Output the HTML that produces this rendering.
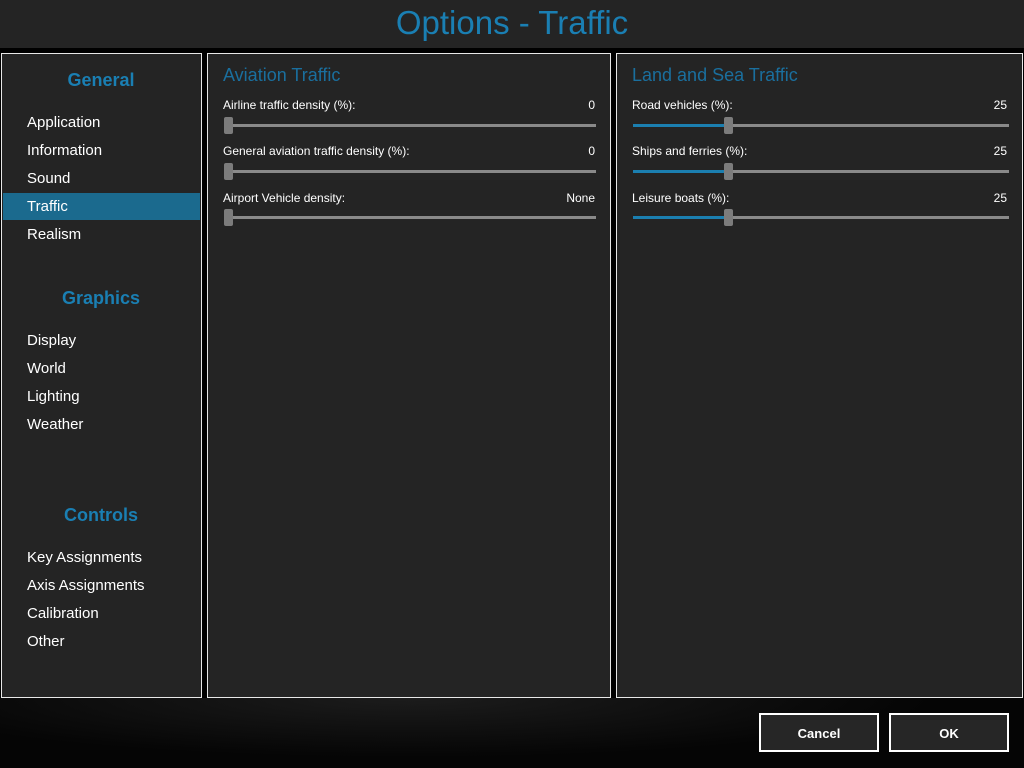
<!DOCTYPE html>
<html><head><style>
*{margin:0;padding:0;box-sizing:border-box}
body{width:1024px;height:768px;background:#000;font-family:"Liberation Sans",sans-serif;position:relative;overflow:hidden;color:#fff}
.hdr{position:absolute;left:0;top:0;width:1024px;height:48px;background:#242424;text-align:center;font-size:33px;color:#1a7fb3;line-height:46px}
.bot{position:absolute;left:0;top:698px;width:1024px;height:70px;background:radial-gradient(ellipse at 40% 0%,#1c1c1c 0%,#050505 60%)}
.pn{position:absolute;top:53px;height:645px;background:#242424;border:1px solid #e8e8e8}
.cat{position:absolute;width:198px;text-align:center;font-weight:bold;font-size:18px;color:#1a7fb3}
.it{position:absolute;left:25px;font-size:15px}
.sel{position:absolute;left:1px;top:139px;width:197px;height:27px;background:#1b6a8e}
.h{position:absolute;font-size:18px;color:#1a6f9e}
.lb{position:absolute;font-size:12px}
.v{position:absolute;font-size:12px;text-align:right}
.tr{position:absolute;height:3px;background:#8a8a8a}
.fl{position:absolute;height:3px;background:#1b7fb0}
.th{position:absolute;width:9px;height:17px;background:#7c7c7c;border-radius:2px}
.btn{position:absolute;top:713px;width:120px;height:39px;border:2px solid #fff;background:#262626;font-size:13px;font-weight:bold;text-align:center;line-height:37px}
</style></head><body>
<div class="hdr">Options - Traffic</div>
<div class="bot"></div>
<div class="pn" style="left:1px;width:201px">
 <div class="cat" style="top:16px">General</div>
 <div class="sel"></div>
 <div class="it" style="top:60px">Application</div>
 <div class="it" style="top:88px">Information</div>
 <div class="it" style="top:116px">Sound</div>
 <div class="it" style="top:144px">Traffic</div>
 <div class="it" style="top:172px">Realism</div>
 <div class="cat" style="top:234px">Graphics</div>
 <div class="it" style="top:278px">Display</div>
 <div class="it" style="top:306px">World</div>
 <div class="it" style="top:334px">Lighting</div>
 <div class="it" style="top:362px">Weather</div>
 <div class="cat" style="top:451px">Controls</div>
 <div class="it" style="top:495px">Key Assignments</div>
 <div class="it" style="top:523px">Axis Assignments</div>
 <div class="it" style="top:551px">Calibration</div>
 <div class="it" style="top:579px">Other</div>
</div>
<div class="pn" style="left:207px;width:404px">
 <div class="h" style="left:15px;top:11px">Aviation Traffic</div>
 <div class="lb" style="left:15px;top:44px">Airline traffic density (%):</div><div class="v" style="right:15px;top:44px">0</div>
 <div class="tr" style="left:20px;top:70px;width:368px"></div><div class="th" style="left:16px;top:63px"></div>
 <div class="lb" style="left:15px;top:90px">General aviation traffic density (%):</div><div class="v" style="right:15px;top:90px">0</div>
 <div class="tr" style="left:20px;top:116px;width:368px"></div><div class="th" style="left:16px;top:109px"></div>
 <div class="lb" style="left:15px;top:137px">Airport Vehicle density:</div><div class="v" style="right:15px;top:137px">None</div>
 <div class="tr" style="left:20px;top:162px;width:368px"></div><div class="th" style="left:16px;top:155px"></div>
</div>
<div class="pn" style="left:616px;width:407px">
 <div class="h" style="left:15px;top:11px">Land and Sea Traffic</div>
 <div class="lb" style="left:15px;top:44px">Road vehicles (%):</div><div class="v" style="right:15px;top:44px">25</div>
 <div class="tr" style="left:16px;top:70px;width:376px"></div><div class="fl" style="left:16px;top:70px;width:92px"></div><div class="th" style="left:107px;top:63px"></div>
 <div class="lb" style="left:15px;top:90px">Ships and ferries (%):</div><div class="v" style="right:15px;top:90px">25</div>
 <div class="tr" style="left:16px;top:116px;width:376px"></div><div class="fl" style="left:16px;top:116px;width:92px"></div><div class="th" style="left:107px;top:109px"></div>
 <div class="lb" style="left:15px;top:137px">Leisure boats (%):</div><div class="v" style="right:15px;top:137px">25</div>
 <div class="tr" style="left:16px;top:162px;width:376px"></div><div class="fl" style="left:16px;top:162px;width:92px"></div><div class="th" style="left:107px;top:155px"></div>
</div>
<div class="btn" style="left:759px">Cancel</div>
<div class="btn" style="left:889px">OK</div>
</body></html>
